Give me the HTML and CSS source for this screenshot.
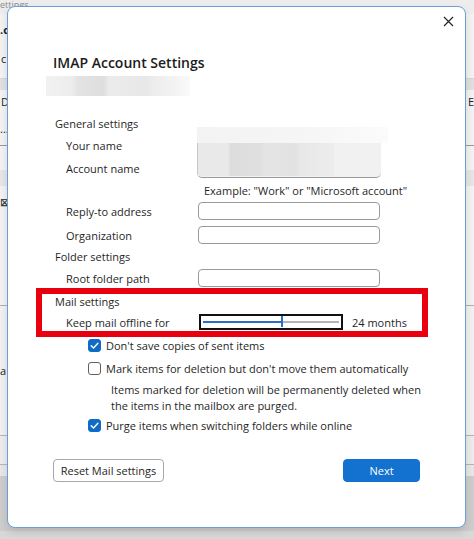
FILE: index.html
```html
<!DOCTYPE html>
<html>
<head>
<meta charset="utf-8">
<title>IMAP Account Settings</title>
<link rel="stylesheet" href="styles.css">
</head>
<body>
<div class="backdrop">
  <div class="bg-row bg-top"><span class="bg-text-top">ettings</span></div>
  <div class="bg-row bg-a"><span class="frag bold">.c</span></div>
  <div class="bg-row bg-a2"><span class="frag">c</span></div>
  <div class="bg-row bg-band"></div>
  <div class="bg-row bg-b"><span class="frag">D</span><span class="frag">: E</span></div>
  <div class="bg-row bg-c"><span class="frag">...</span></div>
  <div class="bg-row bg-d"></div>
  <div class="bg-row bg-band2"></div>
  <div class="bg-row bg-e"><span class="frag">&#8864;</span></div>
  <div class="bg-row bg-f"></div>
  <div class="bg-row bg-g"><span class="frag">a</span></div>
  <div class="bg-row bg-h"></div>
  <div class="bg-row bg-i"></div>
  <div class="bg-row bg-j"></div>
  <div class="bg-row bg-k"></div>
</div>

<div class="dialog">
  <button class="close" aria-label="Close">
    <svg width="11" height="11" viewBox="0 0 11 11"><path d="M1 1 L10 10 M10 1 L1 10" stroke="#1f1f1f" stroke-width="1.1" fill="none"/></svg>
  </button>

  <h1 class="title">IMAP Account Settings</h1>
  <div class="redact-bar"></div>

  <div class="form">
    <div class="redact-box">
      <div class="rb-top"></div>
      <div class="rb-bottom"><div class="rb-blocks"></div></div>
    </div>

    <div class="section">General settings</div>
    <div class="row r-yourname"><span class="label">Your name</span><span class="field blank"></span></div>
    <div class="row r-account"><span class="label">Account name</span><span class="field blank"></span></div>
    <div class="row r-example"><span class="label"></span><span class="hint">Example: "Work" or "Microsoft account"</span></div>
    <div class="row r-input"><span class="label">Reply-to address</span><span class="field"></span></div>
    <div class="row r-input r-gap"><span class="label">Organization</span><span class="field"></span></div>

    <div class="section s-folder">Folder settings</div>
    <div class="row r-input"><span class="label">Root folder path</span><span class="field"></span></div>

    <div class="mail-group">
      <div class="section s-mail">Mail settings</div>
      <div class="row r-keep">
        <span class="label">Keep mail offline for</span>
        <span class="slider"><span class="track"><span class="fill"></span><span class="thumb"></span></span></span>
        <span class="months">24 months</span>
      </div>
    </div>

    <div class="check c1"><span class="box on"><svg width="13" height="13" viewBox="0 0 13 13"><path d="M3.2 6.8 L5.5 9 L9.9 4.3" stroke="#fff" stroke-width="1.4" fill="none" stroke-linecap="round" stroke-linejoin="round"/></svg></span><span>Don't save copies of sent items</span></div>
    <div class="check c2"><span class="box"></span><span>Mark items for deletion but don't move them automatically</span></div>
    <p class="desc">Items marked for deletion will be permanently deleted when<br>the items in the mailbox are purged.</p>
    <div class="check c3"><span class="box on"><svg width="13" height="13" viewBox="0 0 13 13"><path d="M3.2 6.8 L5.5 9 L9.9 4.3" stroke="#fff" stroke-width="1.4" fill="none" stroke-linecap="round" stroke-linejoin="round"/></svg></span><span>Purge items when switching folders while online</span></div>
  </div>

  <div class="buttons">
    <button class="btn">Reset Mail settings</button>
    <button class="btn primary">Next</button>
  </div>
</div>
</body>
</html>
```

FILE: styles.css
```css
*, *::before, *::after { box-sizing: border-box; }
html, body { margin: 0; padding: 0; }
body {
  width: 474px;
  height: 539px;
  overflow: hidden;
  position: relative;
  background: #e4e4e4;
  font-family: "Open Sans", "Noto Sans", sans-serif;
  font-size: 11px;
  color: #1f1f1f;
}

/* ---------- app behind the dialog ---------- */
.backdrop { display: flex; flex-direction: column; width: 474px; }
.bg-row { display: flex; justify-content: space-between; align-items: center; font-size: 11px; color: #222; }
.frag { line-height: 1; }
.bold { font-weight: 700; }
.bg-top { height: 14px; background: #ededed; align-items: flex-start; }
.bg-text-top { color: #8a8a8a; font-size: 9px; line-height: 9px; margin-top: 0; margin-left: 0; }
.bg-a { height: 24px; background: #f3f3f3; padding-top: 6px; }
.bg-a2 { height: 40px; background: #f3f3f3; padding-left: 1px; }
.bg-band { height: 12px; background: #e0e0e0; border-top: 1px solid #d6d6d6; }
.bg-b { height: 22px; background: #f3f3f3; padding-left: 1px; }
.bg-c { height: 34px; background: #f3f3f3; border-bottom: 1px solid #9a9a9a; }
.bg-d { height: 24px; background: #f3f3f3; }
.bg-band2 { height: 16px; background: #e6e6e6; }
.bg-e { height: 30px; background: #f3f3f3; }
.bg-f { height: 90px; background: #f3f3f3; border-bottom: 1px solid #b0b0b0; }
.bg-g { height: 130px; background: #f1f1f1; border-bottom: 1px solid #b5b5b5; }
.bg-h { height: 29px; background: #ececec; border-bottom: 1px solid #b5b5b5; }
.bg-i { height: 11px; background: #e7e7e7; }
.bg-j { height: 55px; background: #cdcdcd; }
.bg-k { height: 30px; background: #d8d8d8; }

/* ---------- dialog ---------- */
.dialog {
  position: absolute;
  left: 7px;
  top: 6px;
  width: 459px;
  height: 522px;
  background: #fff;
  border: 1px solid #6d9fd6;
  border-radius: 8px;
  box-shadow: 0 4px 8px rgba(0,0,0,0.12);
  display: flex;
  flex-direction: column;
}
.close {
  position: absolute;
  top: 8px;
  right: 10px;
  width: 13px;
  height: 13px;
  padding: 0;
  border: 0;
  background: none;
  display: flex;
  align-items: center;
  justify-content: center;
}
.title {
  margin: 46px 0 0 45px;
  font-size: 14px;
  line-height: 20px;
  font-weight: 600;
  color: #1b1b1b;
}
.redact-bar {
  margin: 3px 0 0 38px;
  width: 144px;
  height: 20px;
  background: linear-gradient(90deg, #f1f1f1 0%, #ededed 18%, #e3e3e3 22%, #dedede 40%, #ebebeb 44%, #e8e8e8 70%, #ededed 75%, #f3f3f3 90%, #fafafa 100%);
}

.form { position: relative; margin-top: 18px; display: flex; flex-direction: column; }
.section { padding-left: 47px; height: 20px; line-height: 20px; }
.row { display: flex; align-items: center; }
.label { width: 190px; padding-left: 58px; flex: none; white-space: nowrap; }
.field {
  width: 182px;
  height: 18px;
  border: 1px solid #9a9a9a;
  border-radius: 4px;
  background: #fff;
}
.field.blank { border-color: transparent; }
.r-yourname { height: 22px; }
.r-account { height: 24px; }
.r-example { height: 20px; }
.hint { padding-left: 6px; }
.r-input { height: 22px; }
.r-gap { margin-top: 2px; }
.s-folder { margin-top: 1px; }

/* redaction over name fields */
.redact-box {
  position: absolute;
  left: 189px;
  top: 13px;
  width: 191px;
  height: 51px;
  display: flex;
  flex-direction: column;
}
.rb-top { height: 16px; background: linear-gradient(90deg, #f3f3f3, #f6f6f6 60%, #fbfbfb); }
.rb-bottom {
  flex: 1;
  background: #f1f1f1;
  border-bottom: 1px solid #9a9a9a;
  border-left: 1px solid #c8c8c8;
  border-radius: 0 0 5px 5px;
  width: 184px;
}
.rb-blocks {
  width: 136px;
  height: 33px;
  background: linear-gradient(90deg, #e9e9e9 0%, #e9e9e9 22%, #dcdcdc 24%, #dfdfdf 45%, #e4e4e4 50%, #e2e2e2 72%, #e8e8e8 76%, #ececec 100%);
}

/* mail group with red annotation */
.mail-group { position: relative; margin-top: 3px; }
.mail-group::before {
  content: "";
  position: absolute;
  left: 28px;
  top: -4px;
  width: 392px;
  height: 49px;
  border: 6px solid #e8000e;
}
.r-keep { height: 20px; }
.r-keep .label { width: 191px; }
.slider {
  width: 144px;
  height: 16px;
  border: 2px solid #111;
  display: flex;
  align-items: center;
  padding: 0 2px;
}
.track { position: relative; flex: 1; height: 2px; background: #b4b4b4; display: flex; }
.fill { width: 78px; height: 2px; background: #2a6fc4; }
.thumb { width: 2px; height: 11px; background: #2a6fc4; margin-top: -5px; }
.months { margin-left: 9px; }

/* checkboxes */
.check { display: flex; align-items: center; gap: 5px; padding-left: 80px; height: 20px; }
.c1 { margin-top: 3px; }
.c2 { margin-top: 3px; }
.c3 { margin-top: 1px; }
.box {
  width: 13px;
  height: 13px;
  border: 1px solid #5f5f5f;
  border-radius: 3px;
  background: #fff;
  flex: none;
  display: flex;
}
.box.on { background: #0f6cc6; border-color: #0f6cc6; }
.box.on svg { margin: -1px; }
.desc { margin: 4px 0 0 103px; line-height: 16px; }

/* buttons */
.buttons {
  margin-top: 24px;
  padding: 0 45px;
  display: flex;
  justify-content: space-between;
}
.btn {
  font-family: inherit;
  font-size: 11px;
  height: 23px;
  padding: 0 4px;
  border: 1px solid #a8a8a8;
  border-radius: 4px;
  background: #fff;
  color: #1f1f1f;
  width: 111px;
  white-space: nowrap;
}
.btn.primary {
  width: 77px;
  background: #1371cf;
  border-color: #1371cf;
  color: #fff;
}
```
